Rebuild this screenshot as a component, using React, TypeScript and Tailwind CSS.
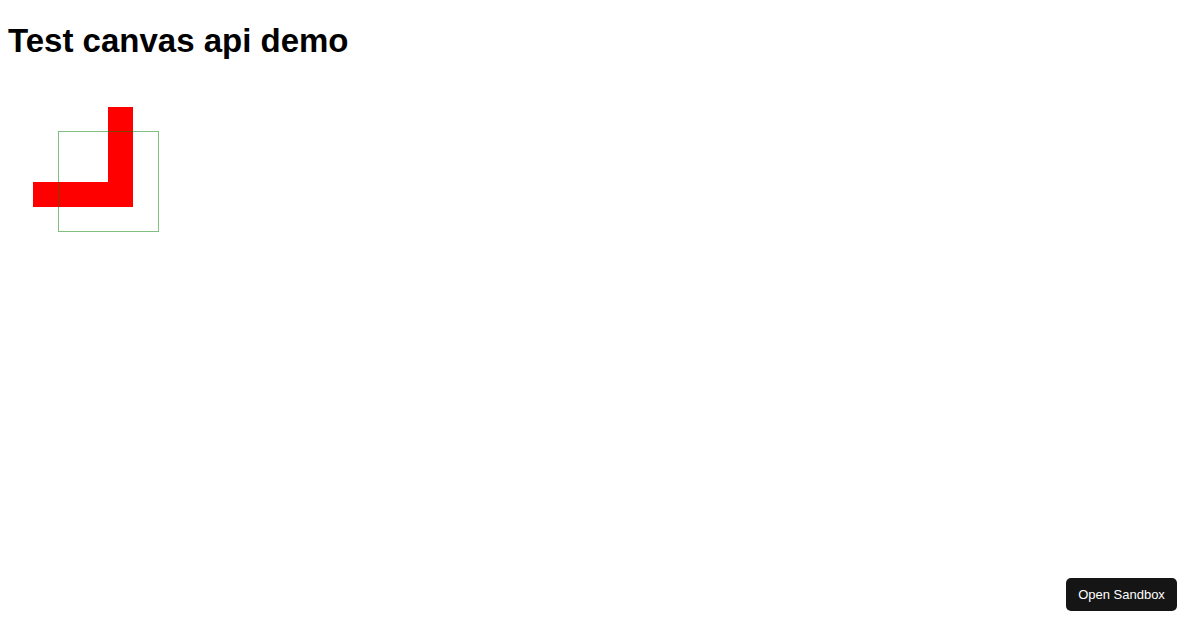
export default function App() {
  return (
    <div className="min-h-[630px] bg-white px-2 pt-0 font-['Liberation_Sans',Arial,sans-serif] text-black">
      <h1 className="mt-[22px] mb-[22.5px] text-[33px] font-bold leading-[37px]">Test canvas api demo</h1>
      <svg width="300" height="150" viewBox="0 0 300 150" className="block" shapeRendering="crispEdges">
        <rect x="100" y="25" width="25" height="100" fill="#ff0000" />
        <rect x="25" y="100" width="100" height="25" fill="#ff0000" />
        <rect x="50.5" y="49.5" width="100" height="100" fill="none" stroke="rgba(0,128,0,0.5)" strokeWidth="1" />
      </svg>
      <button
        type="button"
        className="fixed bottom-[19px] right-[23px] h-[33px] w-[111px] rounded-[5px] bg-[#151515] text-[13px] text-white"
      >
        Open Sandbox
      </button>
    </div>
  );
}
